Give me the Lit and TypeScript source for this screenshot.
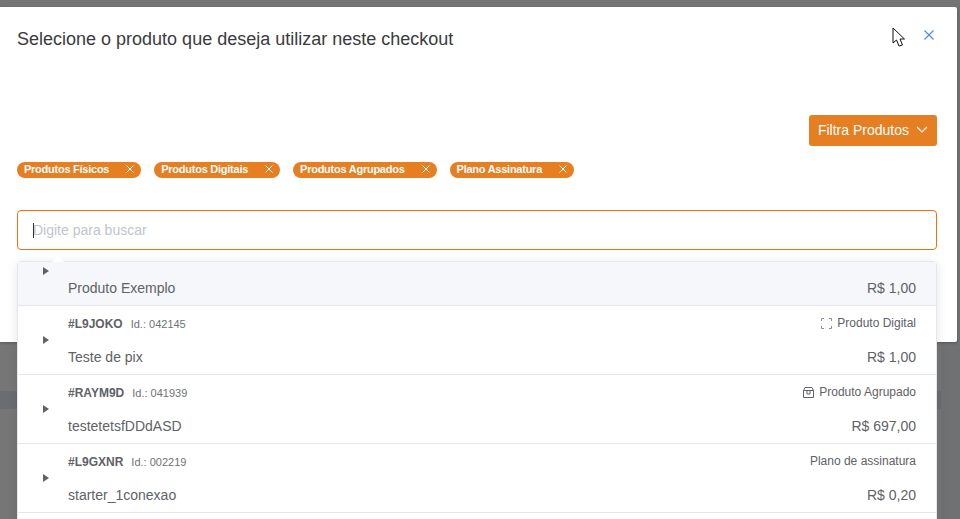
import { LitElement, html, css, svg } from "lit";
import { customElement } from "lit/decorators.js";

const TAGS = ["Produtos Físicos", "Produtos Digitais", "Produtos Agrupados", "Plano Assinatura"];

const ROWS = [
  { name: "Produto Exemplo", price: "R$ 1,00", active: true },
  { code: "#L9JOKO", id: "042145", type: "Produto Digital", icon: "scan", name: "Teste de pix", price: "R$ 1,00" },
  { code: "#RAYM9D", id: "041939", type: "Produto Agrupado", icon: "box", name: "testetetsfDDdASD", price: "R$ 697,00" },
  { code: "#L9GXNR", id: "002219", type: "Plano de assinatura", name: "starter_1conexao", price: "R$ 0,20" },
];

const scanIcon = svg`<path d="M.5 3V.5H3M8 .5h2.500V3M10.500 8v2.500H8M3 10.500H.5V8" fill="none" stroke="#8b8d91" stroke-width="1"/>`;
const boxIcon = svg`<path d="M.5 3.500h10v7H.5zM.5 3.500 2 .5h7l1.500 3M4 3.500V7h3V3.500" fill="none" stroke="#606266" stroke-width="1"/>`;

@customElement("app-root")
export class AppRoot extends LitElement {
  static styles = css`
    :host {
      display: block;
      position: relative;
      width: 960px;
      height: 519px;
      overflow: hidden;
      font-family: "Liberation Sans", Arial, sans-serif;
      background:
        linear-gradient(#6c6d72, #6c6d72) 0 391px / 941px 18px no-repeat,
        linear-gradient(#767677, #767677) 0 342px / 941px 177px no-repeat,
        #707172;
    }
    .top-strip {
      height: 7px;
      background: #757576;
    }
    .modal {
      width: 957px;
      height: 335px;
      box-sizing: border-box;
      padding: 20px 20px 0 17px;
      background: #fff;
      border-radius: 0 2px 2px 0;
      box-shadow: 0 1px 3px rgba(0, 0, 0, 0.25);
    }
    .header {
      display: flex;
      align-items: center;
      justify-content: space-between;
      height: 24px;
    }
    .title {
      margin: 0;
      font-size: 18px;
      font-weight: 400;
      line-height: 24px;
      color: #3a3b3d;
    }
    .close {
      display: block;
      width: 10px;
      height: 10px;
      margin-right: 3px;
      margin-top: -9px;
    }
    .filter-row {
      display: flex;
      justify-content: flex-end;
      margin-top: 64px;
    }
    .filter {
      display: flex;
      align-items: center;
      gap: 7px;
      height: 31px;
      box-sizing: border-box;
      padding: 0 9px 2px;
      border-radius: 3px;
      background: #e67e22;
      color: #fff;
      font-size: 14px;
    }
    .filter svg {
      display: block;
      width: 12px;
      height: 7px;
    }
    .tags {
      display: flex;
      gap: 13px;
      margin-top: 16px;
    }
    .tag {
      display: flex;
      align-items: center;
      justify-content: space-between;
      height: 16px;
      box-sizing: border-box;
      padding: 0 7px 2px;
      border-radius: 8px;
      background: #e67e22;
      color: #fff;
      font-size: 11px;
      font-weight: 700;
      letter-spacing: -0.25px;
      white-space: nowrap;
    }
    .tag svg {
      display: block;
      width: 8px;
      height: 8px;
      margin-left: 17px;
    }
    .search {
      position: relative;
      width: 920px;
      margin-top: 32px;
    }
    .input {
      display: block;
      width: 100%;
      height: 40px;
      box-sizing: border-box;
      padding: 0 15px;
      border: 1px solid #f07010;
      border-radius: 4px;
      outline: none;
      font-family: inherit;
      font-size: 14px;
      background: #fff;
    }
    .input::placeholder {
      color: #c0c4cc;
      opacity: 1;
    }
    .caret {
      position: absolute;
      left: 16px;
      top: 13px;
      width: 1px;
      height: 15px;
      background: #303133;
    }
    .dropdown {
      position: absolute;
      left: 0;
      top: 51px;
      width: 100%;
      box-sizing: border-box;
      border: 1px solid #e4e7ed;
      border-radius: 4px;
      background: #fff;
      box-shadow: 0 2px 12px rgba(0, 0, 0, 0.1);
    }
    .pointer {
      position: absolute;
      left: 34px;
      top: -6px;
      width: 0;
      height: 0;
      border-left: 6px solid transparent;
      border-right: 6px solid transparent;
      border-bottom: 6px solid #fff;
    }
    .row {
      display: flex;
      padding: 9px 20px 7px 25px;
      border-bottom: 1px solid #e4e7ed;
    }
    .row.active {
      background: #f5f7fa;
    }
    .arrow {
      align-self: flex-end;
      flex: none;
      width: 0;
      height: 0;
      margin: -8px 19px 23px 0;
      border-top: 4px solid transparent;
      border-bottom: 4px solid transparent;
      border-left: 6px solid #606266;
    }
    .content {
      flex: 1;
      min-width: 0;
    }
    .head {
      display: flex;
      align-items: center;
      justify-content: space-between;
      height: 16px;
      margin-bottom: 16px;
      color: #606266;
    }
    .code {
      font-size: 12px;
      font-weight: 700;
    }
    .id {
      margin-left: 8px;
      font-size: 11px;
      color: #6f7175;
    }
    .type {
      display: flex;
      align-items: center;
      gap: 5px;
      font-size: 12px;
    }
    .type svg {
      display: block;
      width: 11px;
      height: 11px;
    }
    .body {
      display: flex;
      justify-content: space-between;
      padding-top: 7px;
      font-size: 14px;
      line-height: 20px;
      color: #606266;
    }
    .row .head + .body {
      padding-top: 0;
    }
    .filler {
      height: 40px;
    }
    .cursor {
      position: absolute;
      left: 892px;
      top: 27px;
      width: 14px;
      height: 20px;
    }
  `;

  renderRow(row: any) {
    return html`
      <div class="row ${row.active ? "active" : ""}">
        <span class="arrow"></span>
        <div class="content">
          ${row.code
            ? html`<div class="head">
                <span><span class="code">${row.code}</span><span class="id">Id.: ${row.id}</span></span>
                <span class="type">
                  ${row.icon
                    ? html`<svg viewBox="0 0 11 11">${row.icon === "scan" ? scanIcon : boxIcon}</svg>`
                    : ""}
                  ${row.type}
                </span>
              </div>`
            : ""}
          <div class="body"><span>${row.name}</span><span>${row.price}</span></div>
        </div>
      </div>
    `;
  }

  render() {
    return html`
      <div class="top-strip"></div>
      <div class="modal">
        <div class="header">
          <h1 class="title">Selecione o produto que deseja utilizar neste checkout</h1>
          <svg class="close" viewBox="0 0 10 10">
            <path d="M.5.5l9 9M9.500.5l-9 9" fill="none" stroke="#4a86ee" stroke-width="1.100"/>
          </svg>
        </div>
        <div class="filter-row">
          <div class="filter">
            Filtra Produtos
            <svg viewBox="0 0 12 7"><path d="M1 1l5 5 5-5" fill="none" stroke="#fff" stroke-width="1.100"/></svg>
          </div>
        </div>
        <div class="tags">
          ${TAGS.map(
            (t) => html`<span class="tag">${t}
              <svg viewBox="0 0 8 8"><path d="M.5.5l7 7M7.500.5l-7 7" fill="none" stroke="#fff" stroke-width="1"/></svg>
            </span>`
          )}
        </div>
        <div class="search">
          <input class="input" placeholder="Digite para buscar" />
          <span class="caret"></span>
          <div class="dropdown">
            <span class="pointer"></span>
            ${ROWS.map((r) => this.renderRow(r))}
            <div class="filler"></div>
          </div>
        </div>
      </div>
      <svg class="cursor" viewBox="0 0 14 20">
        <path d="M1 1v15l3.500-3 2.500 6 3.500-1-2.500-6h4.500z" fill="#fff" stroke="#111" stroke-width="1"/>
      </svg>
    `;
  }
}
